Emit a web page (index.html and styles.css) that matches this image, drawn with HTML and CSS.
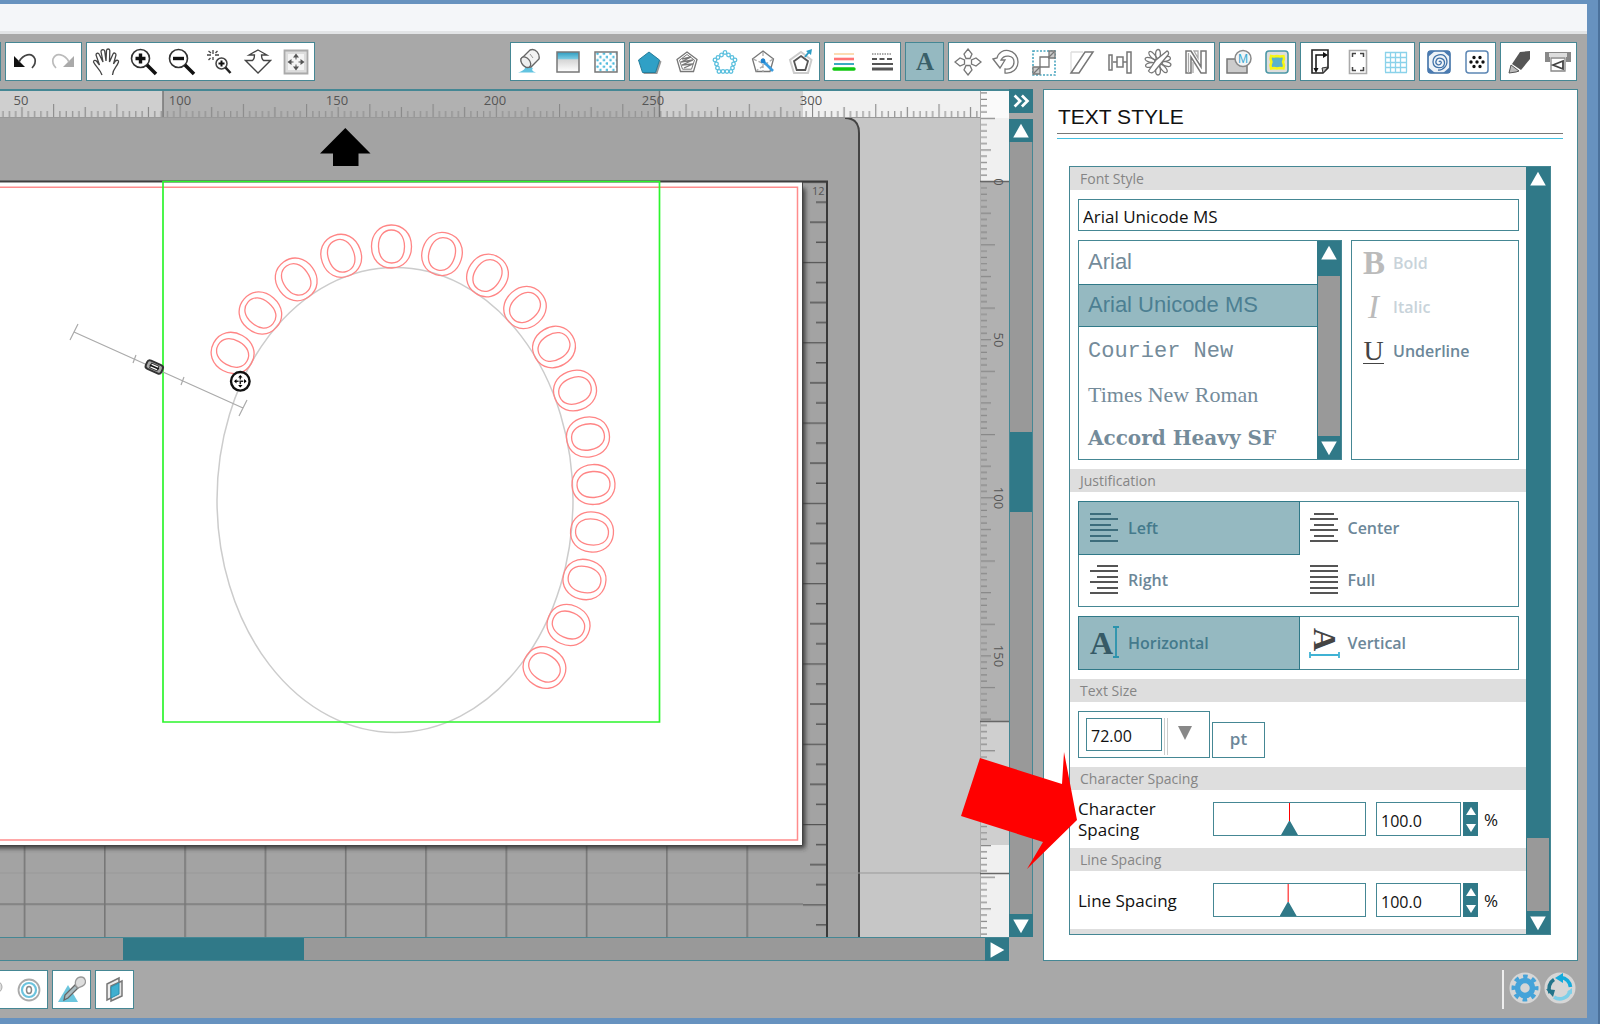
FILE: index.html
```html
<!doctype html>
<html lang="en">

<head>
    <meta charset="utf-8">
    <title>Text Style</title>
    <meta name="viewport" content="width=device-width,initial-scale=1">
    <link rel="stylesheet" href="styles.css">
</head>

<body>
    <div class="window">
        <div class="titlebar"></div>

        <!-- top toolbar -->
        <div class="toolbar">
            <div class="tool-cut"></div>
            <div class="tool-group">
                <button class="tool" aria-label="Undo"><svg viewBox="0 0 28 28"><path d="M3 8v11h11z" fill="#111"/><path d="M8 14C12 6 21 4 24 11c1 4 0 6-3 9" fill="none" stroke="#444" stroke-width="1.700"/></svg></button>
                <button class="tool" aria-label="Redo"><svg viewBox="0 0 28 28"><path d="M25 8v11H14z" fill="#aaa"/><path d="M20 14C16 6 7 4 4 11c-1 4 0 6 3 9" fill="none" stroke="#bbb" stroke-width="1.700"/></svg></button>
            </div>
            <div class="tool-group">
                <button class="tool" aria-label="Pan"><svg viewBox="0 0 28 28" class="ln dark"><path d="M10 27C8 21 4 19 1.500 14c0-2 2-2 3-1l3 4L4 7c0-2 2.500-2.500 3.300-.5L11 14 9 3.500C9 1.500 12 1 12.700 3L14 13l.5-10.500c.3-2 3-2 3.300 0L17.500 14l3.500-8c1-1.700 3-1 3 1l-2.500 9 2-3c1.500-1.500 3.500-.5 3 1C25 19 21 20 20.500 27"/></svg></button>
                <button class="tool" aria-label="Zoom in"><svg viewBox="0 0 28 28"><circle cx="10.500" cy="10.500" r="9" fill="none" stroke="#333" stroke-width="1.600"/><path d="M5.500 10.500h10M10.500 5.500v10" stroke="#111" stroke-width="3.400"/><path d="M17 17l9 9" stroke="#111" stroke-width="3.600"/></svg></button>
                <button class="tool" aria-label="Zoom out"><svg viewBox="0 0 28 28"><circle cx="10.500" cy="10.500" r="9" fill="none" stroke="#333" stroke-width="1.600"/><path d="M5 10.500h11" stroke="#111" stroke-width="3.400"/><path d="M17 17l9 9" stroke="#111" stroke-width="3.600"/></svg></button>
                <button class="tool" aria-label="Zoom selection"><svg viewBox="0 0 28 28"><path d="M7 2v4M1 7h4M9 7h4M2.500 3l2.500 2M7 9v3M2.500 12l2-2M11.500 3l-2 2" stroke="#444" stroke-width="1.300"/><circle cx="15.500" cy="15.500" r="5.500" fill="none" stroke="#444" stroke-width="1.500"/><path d="M12.500 15.500h6M15.500 12.500v6" stroke="#111" stroke-width="2"/><path d="M19.500 19.500l5 5.500" stroke="#222" stroke-width="2.600"/></svg></button>
                <button class="tool" aria-label="Drag zoom"><svg viewBox="0 0 28 28" class="ln dark"><path d="M14 2l9 5h-5.500c0 3 .5 4.500 2 5.500H26.500L14 25 1.500 12.500H8.500c1.500-1 2-2.500 2-5.500H5z"/></svg></button>
                <button class="tool" aria-label="Fit to page"><svg viewBox="0 0 28 28"><path d="M2.500 2.500h23v23h-23z" fill="#ddd" stroke="#aaa" stroke-width="1.800"/><path d="M6 6h16v16H6z" fill="#f4f4f4"/><path d="M14 5.500l3 4h-6zM14 22.500l3-4h-6zM5.500 14l4-3v6zM22.500 14l-4-3v6z" fill="#555"/><path d="M14 9v2.500M14 16.500V19M9 14h2.500M16.500 14H19" stroke="#555"/></svg></button>
            </div>

            <div class="spacer"></div>

            <div class="tool-group">
                <button class="tool" aria-label="Fill color"><svg viewBox="0 0 28 28"><path d="M9 18c1 3-2 5-7 6.500h18c-3-1-5-2.500-3-4.500-3-1-5-1.500-8-2z" fill="#62c3e0"/><path d="M5 11L14 2c6-2 10 4 9 9l-8 8c-6 1-10-3-10-8z" fill="#f4f4f4" stroke="#666" stroke-width="1.400"/><ellipse cx="9.800" cy="14.200" rx="4" ry="6" transform="rotate(-40 9.800 14.200)" fill="#eee" stroke="#666" stroke-width="1.300"/><path d="M14 6l3 4" stroke="#999"/></svg></button>
                <button class="tool" aria-label="Fill gradient"><svg viewBox="0 0 28 28"><defs><linearGradient id="gr" x1="0" y1="0" x2="0" y2="1"><stop offset="0" stop-color="#2d9cc0"/><stop offset=".36" stop-color="#7fcde4"/><stop offset=".38" stop-color="#d5d5d5"/><stop offset="1" stop-color="#fff"/></linearGradient></defs><path d="M3 4h22v20H3z" fill="url(#gr)" stroke="#777" stroke-width="1.500"/></svg></button>
                <button class="tool" aria-label="Fill pattern"><svg viewBox="0 0 28 28"><defs><pattern id="dots" x="3" y="4" width="6.500" height="6.500" patternUnits="userSpaceOnUse"><circle cx="2.500" cy="1.700" r="1.300" fill="#49b9dc"/><circle cx="5.500" cy="5" r="1.300" fill="#49b9dc"/></pattern></defs><path d="M3 4h22v20H3z" fill="url(#dots)" stroke="#777" stroke-width="1.500"/></svg></button>
            </div>
            <div class="tool-group">
                <button class="tool" aria-label="Shadow"><svg viewBox="0 0 28 28"><path d="M15.500 5.500l11 8-4.200 12.500H8.700L4.500 13.500z" fill="#999"/><path d="M14 4l10.500 8-4 12.500H7.500L3.500 12z" fill="#30a0c6" stroke="#257d9b"/></svg></button>
                <button class="tool" aria-label="Sketch"><svg viewBox="0 0 28 28" class="ln"><path d="M14 4l10 7.500-3.500 12h-13L4 11.500z"/><path d="M14 6.500l7.500 5.700-3 9h-9L6.500 12.200z" stroke-width="1"/><path d="M9 11l9-2-10 5 12-2-11 5 11-1-9 4"/></svg></button>
                <button class="tool" aria-label="Rhinestone"><svg viewBox="0 0 28 28" fill="#fff" stroke="#5cc0de" stroke-width="1.300"><circle cx="14" cy="4.500" r="1.800"/><circle cx="10.500" cy="7" r="1.800"/><circle cx="17.500" cy="7" r="1.800"/><circle cx="7" cy="9.500" r="1.800"/><circle cx="21" cy="9.500" r="1.800"/><circle cx="4" cy="12" r="1.800"/><circle cx="24" cy="12" r="1.800"/><circle cx="5.500" cy="16" r="1.800"/><circle cx="22.500" cy="16" r="1.800"/><circle cx="6.500" cy="20" r="1.800"/><circle cx="21.500" cy="20" r="1.800"/><circle cx="8" cy="23.500" r="1.800"/><circle cx="20" cy="23.500" r="1.800"/><circle cx="12" cy="23.500" r="1.800"/><circle cx="16" cy="23.500" r="1.800"/></svg></button>
                <button class="tool" aria-label="Magic fill"><svg viewBox="0 0 28 28" class="ln"><path d="M14 3l10.500 8-3.500 12.500H7L3.500 11z"/><path d="M14 4v20M4 11l18 8M24 11L7 23" stroke="#aaa" stroke-dasharray="4 2"/><path d="M14 13l10 10" stroke="#3a9de0" stroke-width="2.600"/><circle cx="14" cy="13" r="2.400" fill="#1e84d0" stroke="none"/></svg></button>
                <button class="tool" aria-label="Offset"><svg viewBox="0 0 28 28" class="ln"><path d="M14 4l10.500 8-3.500 13H7L3 12z" stroke="#ccc" stroke-width="2"/><path d="M14 8l7 5.200-2.700 8.800H9.700L7 13.200z" stroke="#555" stroke-width="1.800"/><path d="M18 9l4-5" stroke="#2c9cc4" stroke-width="2"/><path d="M19 3l6-2-1 6z" fill="#2c9cc4" stroke="none"/></svg></button>
            </div>
            <div class="tool-group">
                <button class="tool" aria-label="Line color"><svg viewBox="0 0 28 28"><path d="M4 6h20" stroke="#fbd09a" stroke-width="1.500"/><path d="M4 11h20" stroke="#ff7474" stroke-width="2.600"/><path d="M4 16h20" stroke="#3aabbf" stroke-width="2"/><path d="M4 21h20" stroke="#12c812" stroke-width="3.400" stroke-linecap="round"/></svg></button>
                <button class="tool" aria-label="Line style"><svg viewBox="0 0 28 28" stroke="#555"><path d="M4 6h20" stroke-dasharray="1.500 1"/><path d="M4 11h21" stroke-width="2.200" stroke-dasharray="5 2.500"/><path d="M4 16h21" stroke-width="2"/><path d="M4 21h21" stroke-width="3"/></svg></button>
            </div>
            <div class="tool-group">
                <button class="tool active" aria-label="Text style"><svg viewBox="0 0 28 28"><text x="14" y="22" class="serif-a" text-anchor="middle">A</text></svg></button>
            </div>
            <div class="tool-group">
                <button class="tool" aria-label="Move"><svg viewBox="0 0 28 28" class="ln"><path d="M14 1l4 5-2 4.500h-4L10 6zM14 27l4-5-2-4.500h-4L10 22zM1 14l5-4 4.500 2v4L6 18zM27 14l-5-4-4.500 2v4L22 18z"/></svg></button>
                <button class="tool" aria-label="Rotate"><svg viewBox="0 0 28 28" class="ln"><path d="M1 11l7 9 5-8H9c3-6 13-5 13 2 0 5-4 8-9 7v4c7 1 13-4 13-11C26 1 8-2 5 10z"/></svg></button>
                <button class="tool" aria-label="Scale"><svg viewBox="0 0 28 28" class="ln"><path d="M3 3h22v24H3z" stroke="#4aa6c0" stroke-width="1.600" stroke-dasharray="2 1.500"/><path d="M10 9h9v10h-9z"/><path d="M19 3h6v7h-6zM3 19h7v7H3z" fill="#ccc"/><path d="M18 10l6-6M4 25l6-6"/></svg></button>
                <button class="tool" aria-label="Shear"><svg viewBox="0 0 28 28" class="ln"><path d="M3 4h12M3 4v21" stroke="#ddd"/><path d="M17 4h8L11 25H3z" stroke-width="1.500"/></svg></button>
                <button class="tool" aria-label="Align"><svg viewBox="0 0 28 28" class="ln"><path d="M3 7h3v15H3zM21 4h4v21h-4zM11 9h6v10h-6zM7 14h4M17 14h4" stroke-width="1.500"/></svg></button>
                <button class="tool" aria-label="Replicate"><svg viewBox="0 0 28 28" class="ln"><ellipse cx="14" cy="6" rx="2.400" ry="4.500"/><ellipse cx="8.500" cy="7.500" rx="2.200" ry="5" transform="rotate(-40 8.500 7.500)"/><ellipse cx="6" cy="12" rx="5" ry="2.200" transform="rotate(15 6 12)"/><ellipse cx="6" cy="17" rx="4.500" ry="2.200" transform="rotate(-15 6 17)"/><ellipse cx="14" cy="22.500" rx="2.400" ry="4.500"/><ellipse cx="19.500" cy="20.500" rx="2.200" ry="5" transform="rotate(-40 19.500 20.500)"/><ellipse cx="22.500" cy="16" rx="4.500" ry="2.200" transform="rotate(15 22.500 16)"/><ellipse cx="22" cy="11" rx="4.500" ry="2.200" transform="rotate(-15 22 11)"/><path d="M23 3L12 12 4.500 23c2 3 5 2 7-1L24 7c1.500-2 0-4-1-4z" fill="#fff"/></svg></button>
                <button class="tool" aria-label="Nest"><svg viewBox="0 0 28 28" class="ln"><path d="M4 25V3h5l10 16V3h5v22h-5L9 9v16z" stroke-width="1.500"/><path d="M6.500 25V5M11 25V14M12 3l4 7V3z" stroke="#aaa"/></svg></button>
            </div>
            <div class="tool-group">
                <button class="tool" aria-label="Modify"><svg viewBox="0 0 28 28"><path d="M2 11h20v14H2z" fill="#ccc" stroke="#777" stroke-width="1.500"/><circle cx="18" cy="10.500" r="8" fill="#f2f5f6" stroke="#888" stroke-width="1.500"/><text x="18" y="15" class="m-glyph" text-anchor="middle">M</text></svg></button>
                <button class="tool" aria-label="Trace"><svg viewBox="0 0 28 28"><rect x="3" y="3" width="22" height="22" rx="3" fill="#ddd" stroke="#4c98a6" stroke-width="1.600"/><path d="M8 8l3 .5 3-.5 3 .5 3.500-.5.500 3-1 3 1 3-.5 3.500-3.500-.5-3 .5-3-.5-3 .5-.5-3.500 1-3-1-3z" fill="#58b2cb" stroke="#f6f614" stroke-width="2.400"/></svg></button>
            </div>
            <div class="tool-group">
                <button class="tool" aria-label="Page setup"><svg viewBox="0 0 28 28"><path d="M6 2h16v18l-5 5H6z" fill="#fff" stroke="#222" stroke-width="1.600"/><path d="M22 19l-5 6-1-5z" fill="#bbb" stroke="#333"/><path d="M10 22V7h8" fill="none" stroke="#111" stroke-width="1.500"/><path d="M17 4l5 3-5 3zM7.500 20h5L10 25z" fill="#111"/></svg></button>
                <button class="tool" aria-label="Registration marks"><svg viewBox="0 0 28 28" class="ln"><path d="M5.500 2.500h17v23h-17z" stroke="#aaa" stroke-width="1.600"/><path d="M8.500 9V5.500H12M16 5.500h3.500V9M19.500 19v3.500H16M12 22.500H8.500V19" stroke="#444" stroke-width="1.500"/></svg></button>
                <button class="tool" aria-label="Grid"><svg viewBox="0 0 28 28"><path d="M3.500 4v20M8.500 4v20M13.500 4v20M18.500 4v20M24.500 4v20M3 4.500h22M3 9.500h22M3 14.500h22M3 19.500h22M3 24.500h22" stroke="#8ad2ea" stroke-width="1.300"/></svg></button>
            </div>
            <div class="tool-group">
                <button class="tool" aria-label="Spiral"><svg viewBox="0 0 28 28"><rect x="3" y="3" width="22" height="22" rx="3" fill="#eef3f8" stroke="#3f71a7" stroke-width="1.600"/><path d="M3 9V3h7zM25 9V3h-7zM3 19v6h7zM25 19v6h-7z" fill="#4a7ab0"/><path d="M14 14c1-2 3 0 2 1.500-2 3-6 .5-5-2.500 1.500-5 9-3 8.500 2.500-1 6-11 5.500-11.500-1.500C8 6 19 4 21.500 11c2 6-3 11.500-8.500 11" fill="none" stroke="#3f71a7" stroke-width="1.300"/></svg></button>
                <button class="tool" aria-label="Stipple"><svg viewBox="0 0 28 28"><rect x="3" y="3" width="22" height="22" rx="3" fill="#fff" stroke="#5c86b4" stroke-width="1.500"/><path d="M11 9.500h0M17 9.500h0M8 14h0M14 14h0M20 14h0M11 18.500h0M17 18.500h0" stroke="#111" stroke-width="3.400" stroke-linecap="round"/></svg></button>
            </div>
            <div class="tool-group">
                <button class="tool" aria-label="Cut settings"><svg viewBox="0 0 28 28"><path d="M14 4l10-1v8l-9 11-9-6z" fill="#555"/><path d="M5 17l8 6-3 1-7 1z" fill="#bbb" stroke="#555"/></svg></button>
                <button class="tool" aria-label="Send"><svg viewBox="0 0 28 28"><path d="M1 4h26v10h-5V9H6v5H1z" fill="#888"/><path d="M5 5h18v4H5z" fill="#ddd"/><path d="M7 10h14v13H7z" fill="#fff" stroke="#888" stroke-width="1.300"/><path d="M9 17l10-4v8z" fill="none" stroke="#444" stroke-width="1.800"/></svg></button>
            </div>
        </div>

        <div class="main">
            <div class="work">
                <!-- drawing area with rulers, 10 mm = 31.62 -->
                <div class="canvas">
                    <svg class="ruler-h">
                        <defs>
                            <pattern id="tick-h" x="-136.600" y="0" width="63.240" height="27" patternUnits="userSpaceOnUse">
                                <path d="M.5 13v14M32.100 16v11" stroke="#888" stroke-width="1.200"/>
                                <path d="M6.800 20v7M13.100 20v7M19.500 20v7M25.800 20v7M38.400 20v7M44.800 20v7M51.100 20v7M57.400 20v7" stroke="#909090" stroke-width="1.200"/>
                            </pattern>
                        </defs>
                        <rect width="100%" height="27" fill="#f0f0f0"/>
                        <rect width="803" height="27" fill="#cfcfcf"/>
                        <rect x="163" width="497" height="27" fill="#b1b1b1"/>
                        <rect width="100%" height="27" fill="url(#tick-h)"/>
                        <path d="M163 0v27M659.500 0v27" stroke="#777" stroke-width="1.500"/>
                        <path d="M0 26.500h2000" stroke="#999"/>
                        <g class="ruler-text" text-anchor="middle">
                            <text x="21" y="14">50</text>
                            <text x="180" y="14">100</text>
                            <text x="337" y="14">150</text>
                            <text x="495" y="14">200</text>
                            <text x="653" y="14">250</text>
                            <text x="811" y="14">300</text>
                        </g>
                    </svg>
                    <svg class="ruler-v">
                        <defs>
                            <pattern id="tick-v" x="0" y="90" width="29" height="63.240" patternUnits="userSpaceOnUse">
                                <path d="M0 .6h15M0 32.200h11" stroke="#888" stroke-width="1.200"/>
                                <path d="M0 6.900h7M0 13.200h7M0 19.500h7M0 25.900h7M0 38.500h7M0 44.900h7M0 51.200h7M0 57.500h7" stroke="#888" stroke-width="1.200"/>
                            </pattern>
                        </defs>
                        <rect width="29" height="100%" fill="#f0f0f0"/>
                        <rect width="29" height="27" fill="#fafafa"/>
                        <rect y="90" width="29" height="540" fill="#b1b1b1"/>
                        <rect y="630" width="29" height="124" fill="#cfcfcf"/>
                        <rect width="29" height="100%" fill="url(#tick-v)"/>
                        <path d="M.5 0v2000" stroke="#aaa"/>
                        <path d="M0 90.500h29M0 630.500h29M0 782.500h29" stroke="#666" stroke-width="1.500"/>
                        <g class="ruler-text" text-anchor="middle">
                            <text transform="translate(14 91) rotate(90)">0</text>
                            <text transform="translate(14 249) rotate(90)">50</text>
                            <text transform="translate(14 407) rotate(90)">100</text>
                            <text transform="translate(14 565) rotate(90)">150</text>
                        </g>
                    </svg>
                    <svg class="stage">
                        <defs>
                            <pattern id="notch" x="803" y="63.600" width="24" height="80.300" patternUnits="userSpaceOnUse">
                                <path d="M0 .5h24M13 20.500h11M7 40.600h17M13 60.700h11" stroke="#555" stroke-width="1.500"/>
                            </pattern>
                            <pattern id="grid" x="23.700" y="62.700" width="80.300" height="80.300" patternUnits="userSpaceOnUse">
                                <path d="M0 .8h81M.8 0v81" stroke="#777" stroke-width="1.600"/>
                            </pattern>
                            <filter id="soft"><feGaussianBlur stdDeviation="2.500"/></filter>
                            <g id="o">
                                <path d="M0-21.500C12-21.500 20-12.500 20 0S12 21.500 0 21.500-20 12.500-20 0-12-21.500 0-21.500z"/>
                                <path d="M0-16.500C8-16.500 13-10 13 0S8 16.500 0 16.500-13 10-13 0-8-16.500 0-16.500z"/>
                            </g>
                        </defs>
                        <rect width="100%" height="100%" fill="#c6c6c6"/>
                        <!-- cutting mat -->
                        <path d="M-5 0H845q14 0 14 15V2000H-5z" fill="#a3a3a3"/>
                        <path d="M845 0q14 0 14 15V2000" fill="none" stroke="#444" stroke-width="2"/>
                        <path d="M0 755h980" stroke="#999"/>
                        <rect y="727" width="803" height="2000" fill="url(#grid)"/>
                        <rect x="803" y="64" width="24" height="2000" fill="url(#notch)"/>
                        <path d="M0 63.500h827V2000" fill="none" stroke="#3a3a3a" stroke-width="2"/>
                        <text x="812" y="77" class="mat-text">12</text>
                        <path d="M345.300 10l25.200 25.500h-12V48H333V35.500h-13z"/>
                        <!-- page -->
                        <rect x="-20" y="70" width="825" height="660" fill="#333" filter="url(#soft)"/>
                        <path d="M-5 64H802.500V727.500H-5z" fill="#fff" stroke="#444"/>
                        <path d="M-5 69.200H797.500V722H-5z" fill="none" stroke="#ff8c8c" stroke-width="1.500"/>
                        <ellipse cx="395" cy="382" rx="178" ry="232.500" fill="none" stroke="#ccc" stroke-width="1.500"/>
                        <g fill="none" stroke="#ff8585" stroke-width="1.300">
                            <use href="#o" transform="translate(232.600 235) rotate(-61)"/>
                            <use href="#o" transform="translate(260.400 195) rotate(-49)"/>
                            <use href="#o" transform="translate(296.200 161.400) rotate(-36)"/>
                            <use href="#o" transform="translate(341.200 137.800) rotate(-20)"/>
                            <use href="#o" transform="translate(391.500 128.500) rotate(-1)"/>
                            <use href="#o" transform="translate(442 136) rotate(17)"/>
                            <use href="#o" transform="translate(487.500 157.500) rotate(34)"/>
                            <use href="#o" transform="translate(525 189.500) rotate(48)"/>
                            <use href="#o" transform="translate(554 229) rotate(59)"/>
                            <use href="#o" transform="translate(575 272.500) rotate(69)"/>
                            <use href="#o" transform="translate(588 319) rotate(79)"/>
                            <use href="#o" transform="translate(593.500 366.500) rotate(87)"/>
                            <use href="#o" transform="translate(592 414) rotate(96)"/>
                            <use href="#o" transform="translate(584.500 461.500) rotate(104)"/>
                            <use href="#o" transform="translate(568.500 507) rotate(114)"/>
                            <use href="#o" transform="translate(544.500 549.500) rotate(125)"/>
                        </g>
                        <path d="M163 63.500H659.500V604H163z" fill="none" stroke="#2df52d" stroke-width="1.700"/>
                        <!-- offset slider of the text path -->
                        <g stroke="#aaa" stroke-width="1.200">
                            <path d="M74 214l169 76M78 206l-8 16M247 282l-8 16M136 237l-3 8M184 259l-3 8"/>
                        </g>
                        <g transform="translate(154.300 249) rotate(24)">
                            <rect x="-8.500" y="-4.500" width="17" height="9" rx="3" fill="#aaa" stroke="#333" stroke-width="2"/>
                            <path d="M-4-2.500h8v5h-8z" fill="#fff" stroke="#333"/>
                            <path d="M-5 0h10" stroke="#111" stroke-width="1.500"/>
                        </g>
                        <circle cx="240.300" cy="263.300" r="9.300" fill="#fff" stroke="#111" stroke-width="2.400"/>
                        <path d="M235 263.300h10.600M240.300 258v10.600" stroke="#222" stroke-width="1.500" stroke-dasharray="3.600 .8"/>
                        <path d="M240.300 257l2.200 2.500h-4.400zM240.300 269.600l2.200-2.500h-4.400zM234 263.300l2.500-2.200v4.400zM246.600 263.300l-2.500-2.200v4.400z"/>
                    </svg>
                </div>
                <div class="vscroll">
                    <button class="sbtn expand" aria-label="Expand"><svg viewBox="0 0 24 24"><path d="M5 6l6 6-6 6M13 6l6 6-6 6" fill="none" stroke="#fff" stroke-width="3"/></svg></button>
                    <button class="sbtn" aria-label="Scroll up"><svg viewBox="0 0 24 24"><path d="M12 4l8.500 15h-17z"/></svg></button>
                    <div class="vtrack"><div class="vthumb"></div></div>
                    <button class="sbtn" aria-label="Scroll down"><svg viewBox="0 0 24 24"><path d="M12 20l8.500-15h-17z"/></svg></button>
                </div>
                <div class="hscroll">
                    <div class="hthumb"></div>
                    <button class="sbtn" aria-label="Scroll right"><svg viewBox="0 0 24 24"><path d="M20 12L5 3.500v17z"/></svg></button>
                </div>
            </div>

            <!-- text style panel -->
            <div class="panel">
                <h1 class="panel-title">TEXT STYLE</h1>
                <div class="panel-rule"></div>
                <div class="panel-box">
                    <div class="options">
                        <h2>Font Style</h2>
                        <div class="section">
                            <input class="font-name" type="text" value="Arial Unicode MS" aria-label="Font name">
                            <div class="font-area">
                                <div class="font-list">
                                    <div class="font-rows">
                                        <label class="font-row f-arial"><input type="radio" name="font">Arial</label>
                                        <label class="font-row f-arial"><input type="radio" name="font" checked>Arial Unicode MS</label>
                                        <label class="font-row f-courier"><input type="radio" name="font">Courier New</label>
                                        <label class="font-row f-times"><input type="radio" name="font">Times New Roman</label>
                                        <label class="font-row f-accord"><input type="radio" name="font">Accord Heavy SF</label>
                                    </div>
                                    <div class="list-scroll">
                                        <button class="sbtn" aria-label="Fonts up"><svg viewBox="0 0 24 24"><path d="M12 4l8.500 15h-17z"/></svg></button>
                                        <div class="list-track"></div>
                                        <button class="sbtn" aria-label="Fonts down"><svg viewBox="0 0 24 24"><path d="M12 20l8.500-15h-17z"/></svg></button>
                                    </div>
                                </div>
                                <div class="style-list">
                                    <label class="style-row off"><input type="checkbox" disabled><span class="glyph g-bold" aria-hidden="true">B</span>Bold</label>
                                    <label class="style-row off"><input type="checkbox" disabled><span class="glyph g-italic" aria-hidden="true">I</span>Italic</label>
                                    <label class="style-row"><input type="checkbox"><span class="glyph g-under" aria-hidden="true">U</span>Underline</label>
                                </div>
                            </div>
                        </div>

                        <h2>Justification</h2>
                        <div class="section">
                            <div class="choices">
                                <label class="choice"><input type="radio" name="just" checked><svg viewBox="0 0 30 34" stroke="#3d6d7c" stroke-width="2"><path d="M1 3h21M1 8h28M1 14h21M1 19h28M1 25h21M1 30h28"/></svg>Left</label>
                                <label class="choice"><input type="radio" name="just"><svg viewBox="0 0 30 34" stroke="#555" stroke-width="2"><path d="M5 3h20M1 8h28M5 14h20M1 19h28M5 25h20M1 30h28"/></svg>Center</label>
                                <label class="choice"><input type="radio" name="just"><svg viewBox="0 0 30 34" stroke="#555" stroke-width="2"><path d="M8 3h21M1 8h28M8 14h21M1 19h28M8 25h21M1 30h28"/></svg>Right</label>
                                <label class="choice"><input type="radio" name="just"><svg viewBox="0 0 30 34" stroke="#555" stroke-width="2"><path d="M1 3h28M1 8h28M1 14h28M1 19h28M1 25h28M1 30h28"/></svg>Full</label>
                            </div>
                            <div class="choices">
                                <label class="choice"><input type="radio" name="dir" checked><svg viewBox="0 0 30 34"><text x="1" y="28" class="dir-a" fill="#365a66">A</text><path d="M24 1h6M24 31h6M27 1v30" stroke="#2a93ad" stroke-width="1.800"/></svg>Horizontal</label>
                                <label class="choice"><input type="radio" name="dir"><svg viewBox="0 0 30 34"><text transform="translate(5 2) rotate(90)" class="dir-a" fill="#444">A</text><path d="M1 26v6M30 26v6M1 29h29" stroke="#3fb2d4" stroke-width="1.800"/></svg>Vertical</label>
                            </div>
                        </div>

                        <h2>Text Size</h2>
                        <div class="section size-row">
                            <div class="combo">
                                <input class="num" type="text" value="72.00" aria-label="Text size">
                                <button class="drop" aria-label="Sizes"><svg viewBox="0 0 14 14"><path d="M0 0h14L7 14z" fill="#888"/></svg></button>
                            </div>
                            <button class="unit">pt</button>
                        </div>

                        <h2>Character Spacing</h2>
                        <div class="spacing-row">
                            <label for="charSpacing">Character Spacing</label>
                            <input id="charSpacing" class="slider" type="range" value="50">
                            <input class="num" type="text" value="100.0" aria-label="Character spacing value">
                            <div class="spin">
                                <button aria-label="Increase"><svg viewBox="0 0 10 8"><path d="M5 0l5 8H0z"/></svg></button>
                                <button aria-label="Decrease"><svg viewBox="0 0 10 8"><path d="M5 8l5-8H0z"/></svg></button>
                            </div>
                            <span>%</span>
                        </div>

                        <h2>Line Spacing</h2>
                        <div class="spacing-row">
                            <label for="lineSpacing">Line Spacing</label>
                            <input id="lineSpacing" class="slider" type="range" value="49">
                            <input class="num" type="text" value="100.0" aria-label="Line spacing value">
                            <div class="spin">
                                <button aria-label="Increase"><svg viewBox="0 0 10 8"><path d="M5 0l5 8H0z"/></svg></button>
                                <button aria-label="Decrease"><svg viewBox="0 0 10 8"><path d="M5 8l5-8H0z"/></svg></button>
                            </div>
                            <span>%</span>
                        </div>
                        <div class="next-head"></div>
                    </div>
                    <div class="panel-scroll">
                        <button class="sbtn" aria-label="Panel up"><svg viewBox="0 0 24 24"><path d="M12 4l8.500 15h-17z"/></svg></button>
                        <div class="panel-thumb"></div>
                        <div class="panel-track"></div>
                        <button class="sbtn" aria-label="Panel down"><svg viewBox="0 0 24 24"><path d="M12 20l8.500-15h-17z"/></svg></button>
                    </div>
                </div>
                <svg class="pointer" viewBox="0 0 116 118"><path d="M19 6l82 26 2-32 13 68-50 49 16-27L0 64z" fill="#f00"/></svg>
            </div>
        </div>

        <!-- bottom toolbar -->
        <div class="bottombar">
            <div class="tool-group open">
                <button class="tool sliver" aria-label="Weld"><svg viewBox="0 0 10 28"><circle cx="-4" cy="11" r="6" fill="#ddd" stroke="#aaa"/></svg></button>
                <button class="tool" aria-label="Offset rings"><svg viewBox="0 0 28 28" fill="none"><circle cx="14" cy="14" r="10.500" stroke="#aaa" stroke-width="1.800"/><circle cx="14" cy="14" r="7" stroke="#6cc3de" stroke-width="2.200"/><ellipse cx="14" cy="14" rx="2.500" ry="3.500" stroke="#888" stroke-width="1.500"/></svg></button>
            </div>
            <div class="tool-group">
                <button class="tool" aria-label="Eyedropper"><svg viewBox="0 0 28 28"><path d="M10 9l10 17H0z" fill="#6cc6de"/><path d="M17 9l3 3-10 10-4 2 1-5z" fill="#a9bcc1" stroke="#666" stroke-width="1.300"/><path d="M18 10c-2-5 1-9 5-9s6 5 3 8c-2 2-5 2-6 3z" fill="#ddd" stroke="#999" stroke-width="1.300"/></svg></button>
            </div>
            <div class="tool-group">
                <button class="tool" aria-label="Layers"><svg viewBox="0 0 28 28"><path d="M6 8l12-6v16L6 24z" fill="#eee" stroke="#777" stroke-width="1.500"/><path d="M10 10l11-5v15l-11 5z" fill="#e4e4e4" stroke="#777" stroke-width="1.500"/><path d="M10 11l8-4v11l-8 4z" fill="#3fafd0" stroke="#2a8fae"/></svg></button>
            </div>
            <div class="spacer"></div>
            <div class="status">
                <button class="round" aria-label="Preferences"><svg viewBox="0 0 32 32"><circle cx="16" cy="16" r="15.500" fill="#d6d6d6"/><circle cx="16" cy="16" r="7.500" fill="none" stroke="#45a3d9" stroke-width="5.500"/><circle cx="16" cy="16" r="11.500" fill="none" stroke="#45a3d9" stroke-width="4" stroke-dasharray="4.516 4.516" stroke-dashoffset="2.258"/></svg></button>
                <button class="round" aria-label="Sync"><svg viewBox="0 0 32 32"><circle cx="16" cy="16" r="15.500" fill="#d6d6d6"/><g fill="none" stroke-width="3.600"><path d="M17 5.500A10.500 10.500 0 0 1 26.500 15" stroke="#15aadb"/><path d="M26 19A10.500 10.500 0 0 1 10 25" stroke="#7dcfe8"/><path d="M6 21A10.500 10.500 0 0 1 10 7.500" stroke="#23748a"/></g><path d="M11 6l8-5v10z" fill="#15aadb"/><path d="M28 16l-5 4 5 2z" fill="#7dcfe8"/><path d="M2 17l9 1-2 7z" fill="#23748a"/></svg></button>
            </div>
        </div>
    </div>
</body>

</html>
```
FILE: styles.css
```css
* {
    box-sizing: border-box;
}

body {
    margin: 0;
    padding-right: 2px;
    background-color: #4b729c;
    font-family: "Open Sans", "Noto Sans", sans-serif;
    font-size: 17px;
    color: #111;
}

button {
    margin: 0;
    padding: 0;
    border: 0;
    background: none;
    font-family: inherit;
}

svg {
    display: block;
}

.window {
    display: flex;
    flex-direction: column;
    height: 100vh;
    border: solid #6792bf;
    border-width: 4px 11px 6px 0;
    background-color: #a8a8a8;
}

.titlebar {
    height: 30px;
    flex: none;
    background-color: #f4f6f9;
    border-bottom: 3px solid #e2e4e6;
}

/* toolbars */
.toolbar {
    display: flex;
    gap: 4px;
    flex: none;
    padding: 8px 10px 8px 0;
}

.spacer {
    flex: 1;
}

.tool-cut {
    width: 1px;
    background-color: #458794;
}

.tool-group {
    display: flex;
    flex: none;
    height: 39px;
    border: 1px solid #458794;
    background-color: #fff;
}

.tool-group.open {
    border-left: 0;
}

.tool {
    width: 38px;
    display: flex;
    align-items: center;
    justify-content: center;
}

.tool:last-child {
    width: 37px;
}

.tool svg {
    width: 28px;
    height: 28px;
}

.tool.sliver {
    width: 10px;
}

.tool.sliver svg {
    width: 10px;
}

.tool.active {
    background-color: #95b9c1;
}

.ln {
    fill: none;
    stroke: #777;
    stroke-width: 1.3;
}

.ln.dark {
    stroke: #444;
}

.serif-a {
    font: bold 25px "Liberation Serif", serif;
    fill: #3a6069;
}

.m-glyph {
    font: 12px "Liberation Sans", sans-serif;
    fill: #37a9d3;
}

/* work area */
.main {
    display: flex;
    flex: 1;
    min-height: 0;
    gap: 10px;
    padding-right: 9px;
}

.work {
    display: grid;
    flex: 1;
    min-width: 0;
    grid-template-columns: minmax(0, 1fr) 24px;
    grid-template-rows: minmax(0, 1fr) 24px;
}

.canvas {
    display: grid;
    min-height: 0;
    overflow: hidden;
    grid-template-columns: minmax(0, 1fr) 29px;
    grid-template-rows: 27px minmax(0, 1fr);
    border-top: 2px solid #458794;
}

.canvas svg {
    width: 100%;
    height: 100%;
    overflow: hidden;
}

.ruler-v {
    grid-column: 2;
    grid-row: 1 / 3;
}

.ruler-h,
.stage {
    grid-column: 1;
}

.ruler-text {
    font-size: 13px;
    fill: #555;
}

.mat-text {
    font-size: 11px;
    fill: #555;
}

.sbtn {
    display: flex;
    align-items: center;
    justify-content: center;
    flex: none;
    width: 24px;
    height: 23px;
    background-color: #307988;
}

.sbtn svg {
    width: 22px;
    height: 22px;
    fill: #fff;
}

.vscroll {
    display: flex;
    flex-direction: column;
}

.expand {
    height: 24px;
    margin-bottom: 6px;
}

.vtrack {
    flex: 1;
    border: solid #458794;
    border-width: 0 1px;
    background-color: #999;
}

.vthumb {
    height: 80px;
    margin-top: 290px;
    background-color: #307988;
}

.hscroll {
    display: flex;
    justify-content: space-between;
    border: solid #458794;
    border-width: 1px 0;
    background-color: #999;
}

.hthumb {
    width: 181px;
    margin-left: 123px;
    background-color: #307988;
}

/* panel */
.panel {
    position: relative;
    display: flex;
    flex-direction: column;
    width: 535px;
    flex: none;
    padding: 14px 14px 25px 13px;
    border: 1px solid #458794;
    background-color: #fff;
}

.panel-title {
    margin: 0;
    padding: 0 1px 3px;
    font: 21px/26px "Liberation Sans", Arial, sans-serif;
}

.panel-rule {
    height: 6px;
    flex: none;
    border-top: 1px solid #777;
    border-bottom: 1px solid #45bfe0;
}

.panel-box {
    display: flex;
    flex: 1;
    min-height: 0;
    margin: 27px 12px 0;
    border: 1px solid #458794;
}

.options {
    flex: 1;
    min-width: 0;
    overflow: hidden;
}

.options h2 {
    margin: 0;
    padding-left: 10px;
    background-color: #dedede;
    font-size: 14px;
    line-height: 23px;
    font-weight: normal;
    color: #858585;
}

.section {
    padding: 9px 7px 9px 8px;
}

.options input[type="text"] {
    border: 1px solid #458794;
    border-radius: 0;
    background-color: #fff;
    font-family: inherit;
    color: #111;
    outline: 0;
}

.options .font-name {
    display: block;
    width: 100%;
    height: 32px;
    padding: 3px 4px 0;
    font-size: 17px;
}

.options input[type="radio"],
.options input[type="checkbox"] {
    appearance: none;
    width: 0;
    height: 0;
    margin: 0;
}

.font-area {
    display: flex;
    gap: 9px;
    height: 220px;
    margin-top: 9px;
}

.font-list {
    display: flex;
    flex: 1;
    border: 1px solid #458794;
}

.font-rows {
    display: flex;
    flex-direction: column;
    flex: 1;
}

.font-row {
    display: flex;
    align-items: center;
    flex: 1;
    padding-left: 9px;
    border: solid transparent;
    border-width: 1px 0;
    font-size: 22px;
    color: #748b9a;
}

.font-row:has(:checked) {
    border-color: #307988;
    background-color: #95b9c1;
    color: #4c7f92;
}

.f-arial {
    font-family: "Liberation Sans", Arial, sans-serif;
}

.f-courier {
    padding-top: 4px;
    font-family: "Liberation Mono", "Courier New", monospace;
}

.f-times {
    font-family: "Liberation Serif", "Times New Roman", serif;
}

.f-accord {
    font-family: "DejaVu Serif", serif;
    font-size: 20px;
    font-weight: bold;
}

.list-scroll {
    display: flex;
    flex-direction: column;
    width: 24px;
    background-color: #307988;
}

.list-track {
    flex: 1;
    margin: 12px 1px 0;
    background-color: #999;
}

.style-list {
    width: 168px;
    padding-left: 11px;
    border: 1px solid #458794;
}

.style-row {
    display: flex;
    align-items: center;
    height: 44px;
    font-size: 16px;
    font-weight: 600;
    color: #6c8799;
}

.style-row.off {
    color: #c8d3da;
}

.glyph {
    width: 21px;
    margin-right: 9px;
    font-family: "Liberation Serif", serif;
    font-weight: normal;
    text-align: center;
    line-height: 32px;
    color: #bbb;
}

.g-bold {
    font-size: 33px;
    font-weight: bold;
}

.g-italic {
    font-size: 33px;
    font-style: italic;
}

.g-under {
    border-bottom: 1px solid #444;
    font-size: 28px;
    line-height: 24px;
    color: #444;
}

.choices {
    display: grid;
    grid-template-columns: 1fr 1fr;
    border: 1px solid #458794;
}

.choices + .choices {
    margin-top: 9px;
}

.choice {
    display: flex;
    align-items: center;
    height: 52px;
    padding-left: 10px;
    font-size: 16px;
    font-weight: 600;
    color: #6c8799;
}

.choice svg {
    width: 30px;
    height: 34px;
    margin-right: 9px;
    overflow: visible;
}

.choice:has(:checked) {
    background-color: #95b9c1;
    outline: 1px solid #307988;
    color: #447a8c;
}

.dir-a {
    font: bold 32px "Liberation Serif", serif;
}

.size-row {
    display: flex;
    align-items: flex-end;
    gap: 2px;
}

.combo {
    display: flex;
    width: 132px;
    height: 47px;
    padding: 6px 7px 2px;
    border: 1px solid #458794;
}

.options .num {
    width: 85px;
    height: 34px;
    padding: 3px 4px 0;
    font-size: 16px;
}

.options .combo .num {
    width: 76px;
    height: 33px;
}

.drop {
    flex: 1;
    margin-left: 2px;
    border-left: 4px double #ccc;
}

.drop svg {
    width: 14px;
    height: 14px;
    margin: 0 auto 8px;
}

.unit {
    width: 53px;
    height: 36px;
    padding-bottom: 4px;
    border: 1px solid #458794;
    font-size: 17px;
    font-weight: 600;
    color: #6c8799;
}

.spacing-row {
    display: flex;
    align-items: center;
    height: 58px;
    padding-left: 8px;
    line-height: 21px;
}

.spacing-row label {
    width: 135px;
    padding-right: 36px;
}

.spacing-row label[for="lineSpacing"] {
    padding-right: 0;
}

.slider {
    appearance: none;
    width: 153px;
    height: 34px;
    margin: 0 10px 0 0;
    border: 1px solid #458794;
    background-color: #fff;
}

.slider::-webkit-slider-thumb {
    appearance: none;
    width: 17px;
    height: 32px;
    background: linear-gradient(#f00 18px, #307988 18px);
    clip-path: polygon(8px 0, 9px 0, 9px 18px, 17px 100%, 0 100%, 8px 18px);
}

.spin {
    display: flex;
    flex-direction: column;
    width: 15px;
    height: 34px;
    margin: 0 6px 0 2px;
    background-color: #307988;
}

.spin button {
    display: flex;
    flex: 1;
    align-items: center;
    justify-content: center;
}

.spin svg {
    width: 10px;
    height: 8px;
    fill: #fff;
}

.next-head {
    height: 30px;
    background-color: #dedede;
}

.panel-scroll {
    display: flex;
    flex-direction: column;
    width: 24px;
    background-color: #307988;
}

.panel-thumb {
    flex: 650;
}

.panel-track {
    flex: 73;
    margin: 0 1px;
    background-color: #999;
}

/* callout arrow lying over the canvas and the panel */
.pointer {
    position: absolute;
    left: -83px;
    top: 662px;
    width: 116px;
    height: 118px;
}

.bottombar {
    display: flex;
    gap: 4px;
    flex: none;
    height: 57px;
    padding: 9px 11px 0 0;
}

.status {
    display: flex;
    align-items: flex-start;
    gap: 3px;
    height: 39px;
    padding: 2px 0 0 5px;
    border-left: 2px solid #eee;
}

.round svg {
    width: 32px;
    height: 32px;
}
```
